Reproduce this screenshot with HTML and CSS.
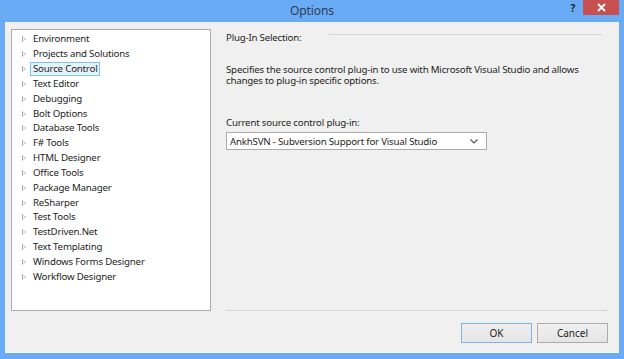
FILE: index.html
```html
<!DOCTYPE html>
<html lang="en">
<head>
    <meta charset="UTF-8">
    <title>Options</title>
    <link rel="stylesheet" href="styles.css">
</head>
<body>

    <div class="window">
        <div class="titlebar">
            <span></span>
            <span class="title">Options</span>
            <div class="caption-buttons">
                <span class="help">?</span>
                <span class="close">
                    <svg width="9" height="9" viewBox="0 0 9 9"><path d="M1 1 L8 8 M8 1 L1 8" stroke="#fff" stroke-width="1.8"/></svg>
                </span>
            </div>
        </div>

        <div class="client">
            <ul class="tree">
                <li><span class="arrow"></span><span class="label">Environment</span></li>
                <li><span class="arrow"></span><span class="label">Projects and Solutions</span></li>
                <li class="selected"><span class="arrow"></span><span class="label">Source Control</span></li>
                <li><span class="arrow"></span><span class="label">Text Editor</span></li>
                <li><span class="arrow"></span><span class="label">Debugging</span></li>
                <li><span class="arrow"></span><span class="label">Bolt Options</span></li>
                <li><span class="arrow"></span><span class="label">Database Tools</span></li>
                <li><span class="arrow"></span><span class="label">F# Tools</span></li>
                <li><span class="arrow"></span><span class="label">HTML Designer</span></li>
                <li><span class="arrow"></span><span class="label">Office Tools</span></li>
                <li><span class="arrow"></span><span class="label">Package Manager</span></li>
                <li><span class="arrow"></span><span class="label">ReSharper</span></li>
                <li><span class="arrow"></span><span class="label">Test Tools</span></li>
                <li><span class="arrow"></span><span class="label">TestDriven.Net</span></li>
                <li><span class="arrow"></span><span class="label">Text Templating</span></li>
                <li><span class="arrow"></span><span class="label">Windows Forms Designer</span></li>
                <li><span class="arrow"></span><span class="label">Workflow Designer</span></li>
            </ul>

            <div class="panel">
                <div class="group-header">
                    <span>Plug-In Selection:</span>
                    <span class="rule"></span>
                </div>
                <p class="description">Specifies the source control plug-in to use with Microsoft Visual Studio and allows changes to plug-in specific options.</p>
                <div class="field-label">Current source control plug-in:</div>
                <div class="combo">
                    <span>AnkhSVN - Subversion Support for Visual Studio</span>
                    <svg width="8" height="5" viewBox="0 0 8 5"><path d="M0.5 0.5 L4 4 L7.5 0.5" fill="none" stroke="#555" stroke-width="1.2"/></svg>
                </div>
                <div class="separator"></div>
            </div>

            <div class="buttons">
                <button class="default">OK</button>
                <button>Cancel</button>
            </div>
        </div>
    </div>

</body>
</html>
```

FILE: styles.css
```css
body {
    margin: 0;
    background-color: #6aabf6;
    font-family: "Noto Sans", "Open Sans", sans-serif;
    font-size: 9.7px;
    letter-spacing: -0.2px;
    color: #1e1e1e;
}
.window {
    width: 624px;
    height: 359px;
    display: flex;
    flex-direction: column;
}
.titlebar {
    height: 22px;
    display: grid;
    grid-template-columns: 1fr auto 1fr;
    align-items: start;
}
.title {
    font-size: 12px;
    letter-spacing: -0.1px;
    color: #2e3d4f;
    line-height: 22px;
}
.caption-buttons {
    display: flex;
    justify-content: flex-end;
    margin-right: 5px;
}
.help {
    font-weight: bold;
    font-size: 10px;
    color: #222;
    line-height: 14px;
    margin-right: 8px;
    margin-top: 1px;
}
.close {
    width: 36px;
    height: 15px;
    background-color: #c75050;
    display: flex;
    align-items: center;
    justify-content: center;
}
.client {
    flex: 1;
    margin: 0 5px 6px 5px;
    background-color: #f0f0f0;
    border-bottom: 1px solid #f8f8f8;
    padding: 7px 12px 0 6px;
    display: grid;
    grid-template-columns: 200px 1fr;
    grid-template-rows: 282px auto;
    column-gap: 15px;
}
.tree {
    list-style-type: none;
    margin: 0;
    padding: 2px 0 0 0;
    background-color: #fff;
    border: 1px solid #acacac;
}
.tree li {
    height: 14.83px;
    display: flex;
    align-items: center;
}
.arrow {
    width: 0;
    height: 0;
    margin-left: 10px;
    margin-right: 4px;
    border-top: 3.5px solid transparent;
    border-bottom: 3.5px solid transparent;
    border-left: 4px solid #a6a6a6;
    position: relative;
}
.arrow::after {
    content: "";
    position: absolute;
    left: -3px;
    top: -2px;
    border-top: 2px solid transparent;
    border-bottom: 2px solid transparent;
    border-left: 2.3px solid #fff;
}
.label {
    padding: 0 2px 0 2px;
    line-height: 12px;
    border: 1px solid transparent;
}
.selected .label {
    background-color: #e5f3fb;
    border-color: #7dc3f0;
}
.panel {
    display: flex;
    flex-direction: column;
}
.group-header {
    display: flex;
    align-items: center;
    margin-right: 5px;
    height: 16px;
}
.rule {
    flex: 1;
    height: 1px;
    margin-left: 28px;
    margin-top: -4px;
    border-top: 1px solid #d5d5d5;
}
.description {
    margin: 19px 20px 0 0;
    line-height: 11px;
}
.field-label {
    margin-top: 31px;
    line-height: 12px;
}
.combo {
    margin-top: 3px;
    height: 16px;
    border: 1px solid #acacac;
    background-color: #fff;
    display: flex;
    align-items: center;
    justify-content: space-between;
    padding: 0 8px 0 3px;
    width: 248px;
}
.separator {
    margin-top: auto;
    border-top: 1px solid #d5d5d5;
}
.buttons {
    grid-column: 2;
    display: flex;
    justify-content: flex-end;
    gap: 5px;
    margin-top: 12px;
    margin-right: -1px;
}
.buttons button {
    width: 71px;
    height: 20px;
    font-family: "Noto Sans", "Open Sans", sans-serif;
    font-size: 10px;
    color: #1e1e1e;
    background: linear-gradient(#efefef, #e5e5e5);
    border: 1px solid #acacac;
    padding: 0;
}
.buttons button.default {
    border-color: #7eb4ea;
}
```
